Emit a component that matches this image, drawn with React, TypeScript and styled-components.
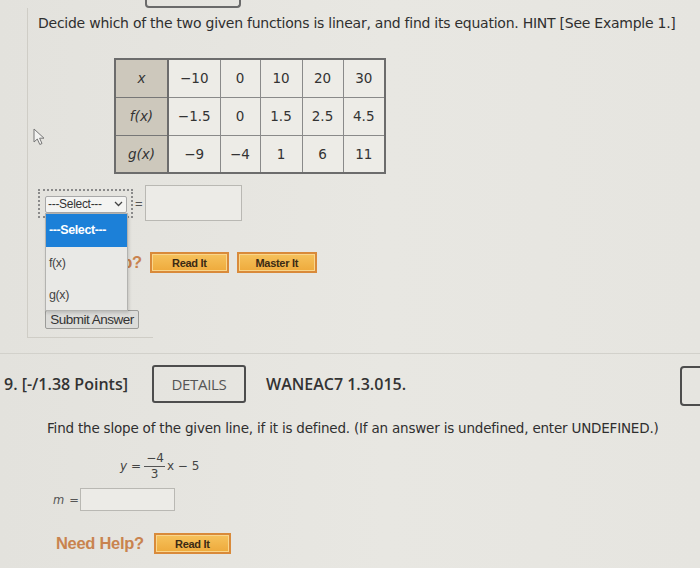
import React from "react";
import styled, { createGlobalStyle } from "styled-components";

// ==================== グローバル ====================

const GlobalStyle = createGlobalStyle`
  html, body {
    margin: 0;
    padding: 0;
    width: 700px;
    height: 568px;
    overflow: hidden;
    background: #e5e4df;
  }
  * { box-sizing: border-box; }
`;

// ==================== スタイル ====================

const Page = styled.div`
  position: relative;
  width: 700px;
  height: 568px;
  overflow: hidden;
  background: linear-gradient(90deg, #e3e2dd 0%, #e8e7e2 55%, #e6e5e0 100%);
  color: #333;
`;

const TopStub = styled.div`
  margin-left: 145px;
  width: 96px;
  height: 8px;
  border: 2px solid #6a6a6a;
  border-top: none;
  border-radius: 0 0 4px 4px;
`;

const ProblemPanel = styled.div`
  position: relative;
  margin-left: 27px;
  height: 330px;
  border-left: 1px solid #cfcdc6;
  padding: 6px 0 0 10px;

  &::after {
    content: "";
    position: absolute;
    left: 0;
    bottom: 0;
    width: 125px;
    border-bottom: 1px solid #cfcdc6;
  }
`;

const Prompt = styled.p`
  margin: 0;
  font-family: "DejaVu Sans", Verdana, sans-serif;
  font-size: 14px;
  letter-spacing: -0.25px;
  line-height: 18px;
  color: #2f2f2f;
`;

const ValueTable = styled.table`
  margin: 26px 0 0 76px;
  border-collapse: collapse;
  border: 2px solid #6c6c6c;
  font-family: "DejaVu Sans", Verdana, sans-serif;
  font-size: 13.5px;
  color: #333;
`;

const HeadCell = styled.th`
  width: 53px;
  height: 38px;
  background: #cdc8bc;
  border: 1px solid #777;
  border-right: 2px solid #6c6c6c;
  font-weight: normal;
  font-style: italic;
  text-align: center;
  padding: 0;
`;

const ValueCell = styled.td<{ $w: number }>`
  width: ${(p) => p.$w}px;
  height: 38px;
  background: #edece7;
  border: 1px solid #8a8a8a;
  text-align: center;
  padding: 0;
`;

const AnswerRow = styled.div`
  display: flex;
  align-items: center;
  margin: 11px 0 0 0;
  height: 36px;
`;

const DottedFrame = styled.div`
  position: relative;
  width: 95px;
  height: 29px;
  border: 2px dotted #8a8a8a;
  padding: 5px 0 0 5px;
`;

const SelectBox = styled.div`
  position: relative;
  display: flex;
  align-items: center;
  justify-content: space-between;
  width: 82px;
  height: 17px;
  background: #f4f4f2;
  border: 1px solid #a8a8a8;
  border-radius: 2px;
  padding: 0 3px 0 2px;
  font-family: "Liberation Sans", Arial, sans-serif;
  font-size: 12px;
  letter-spacing: -0.3px;
  color: #333;
`;

const DropList = styled.div`
  position: absolute;
  top: 16px;
  left: -1px;
  width: 83px;
  height: 98px;
  background: #e9e9e6;
  border: 1px solid #b3b3b0;
  box-shadow: 1px 2px 3px rgba(0, 0, 0, 0.15);
  font-family: "Liberation Sans", Arial, sans-serif;
  font-size: 12.5px;
  letter-spacing: -0.4px;
  z-index: 5;
`;

const DropItem = styled.div<{ $active?: boolean }>`
  height: ${(p) => (p.$active ? 33 : 32)}px;
  display: flex;
  align-items: center;
  padding-left: 3px;
  background: ${(p) => (p.$active ? "#1c80d8" : "transparent")};
  color: ${(p) => (p.$active ? "#fff" : "#444")};
  font-weight: ${(p) => (p.$active ? "bold" : "normal")};
`;

const Equals = styled.span`
  margin: 0 2px 0 2px;
  font-family: "Liberation Sans", Arial, sans-serif;
  font-size: 13px;
  color: #555;
`;

const AnswerInput = styled.div<{ $w: number; $h: number }>`
  width: ${(p) => p.$w}px;
  height: ${(p) => p.$h}px;
  background: #ecebe7;
  border: 1px solid #b9b8b3;
`;

const HelpRow = styled.div<{ $indent: number; $top: number; $gap: number }>`
  display: flex;
  align-items: center;
  gap: ${(p) => p.$gap}px;
  margin-left: ${(p) => p.$indent}px;
  margin-top: ${(p) => p.$top}px;
`;

const HelpLabel = styled.span`
  font-family: "Liberation Sans", Arial, sans-serif;
  font-weight: bold;
  font-size: 16.5px;
  letter-spacing: -0.3px;
  color: #c9834f;
`;

const OrangeButton = styled.div<{ $w: number }>`
  width: ${(p) => p.$w}px;
  height: 21px;
  display: flex;
  align-items: center;
  justify-content: center;
  background: linear-gradient(#f6c25c, #eeaa3c);
  border: 2px solid #d98a3a;
  box-shadow: inset 0 0 0 1px #f9d68c;
  font-family: "Liberation Sans", Arial, sans-serif;
  font-weight: bold;
  font-size: 11px;
  letter-spacing: -0.3px;
  color: #3b2a14;
`;

const SubmitButton = styled.div`
  width: 94px;
  height: 19px;
  margin: 37px 0 0 7px;
  display: flex;
  align-items: center;
  justify-content: center;
  background: #dcdcd9;
  border: 1px solid #9b9b98;
  border-radius: 2px;
  font-family: "Liberation Sans", Arial, sans-serif;
  font-size: 13.5px;
  letter-spacing: -0.5px;
  color: #333;
`;

const Cursor = styled.svg`
  position: absolute;
  left: 5px;
  top: 120px;
  z-index: 6;
`;

const QuestionBlock = styled.div`
  margin-top: 15px;
  border-top: 1px solid #d2d1cb;
  padding-top: 8px;
`;

const QuestionHead = styled.div`
  display: flex;
  align-items: center;
  font-family: "Open Sans", sans-serif;
  color: #333;
`;

const Points = styled.span`
  margin-left: 4px;
  width: 148px;
  font-weight: 600;
  font-size: 16px;
`;

const DetailsButton = styled.div`
  width: 94px;
  height: 38px;
  display: flex;
  align-items: center;
  justify-content: center;
  border: 2px solid #4d4d4d;
  border-radius: 3px;
  font-size: 15px;
  color: #555;
  letter-spacing: -0.3px;
`;

const Code = styled.span`
  margin-left: 20px;
  font-weight: 600;
  font-size: 16px;
`;

const RightStub = styled.div`
  margin-left: auto;
  margin-right: -30px;
  width: 50px;
  height: 40px;
  margin-top: 4px;
  border: 2px solid #4d4d4d;
  border-radius: 4px;
`;

const QuestionBody = styled.div`
  padding-left: 47px;
`;

const Instruction = styled.p`
  margin: 13px 0 0 0;
  font-family: "DejaVu Sans", Verdana, sans-serif;
  font-size: 13.5px;
  letter-spacing: -0.2px;
  line-height: 18px;
  color: #2f2f2f;
`;

const Equation = styled.div`
  display: flex;
  align-items: center;
  margin: 14px 0 0 73px;
  font-family: "DejaVu Sans", Verdana, sans-serif;
  font-size: 12px;
  color: #444;
`;

const Var = styled.i`
  font-style: italic;
  margin-right: 4px;
`;

const Fraction = styled.span`
  display: inline-flex;
  flex-direction: column;
  align-items: center;
  margin: 0 2px 0 3px;
  line-height: 14px;
`;

const Numerator = styled.span`
  border-bottom: 1px solid #555;
  padding: 0 1px 1px 2px;
`;

const SlopeRow = styled.div`
  display: flex;
  align-items: center;
  gap: 1px;
  margin: 7px 0 0 6px;
  font-family: "DejaVu Sans", Verdana, sans-serif;
  font-size: 11.5px;
  color: #555;
`;

// ==================== コンポーネント ====================

const columns = [
  { w: 52, x: "−10", f: "−1.5", g: "−9" },
  { w: 40, x: "0", f: "0", g: "−4" },
  { w: 42, x: "10", f: "1.5", g: "1" },
  { w: 41, x: "20", f: "2.5", g: "6" },
  { w: 42, x: "30", f: "4.5", g: "11" },
];

const Chevron = () => (
  <svg width="9" height="6" viewBox="0 0 9 6">
    <path d="M1 1 L4.5 4.5 L8 1" fill="none" stroke="#444" strokeWidth="1.3" />
  </svg>
);

export default function App() {
  return (
    <>
      <GlobalStyle />
      <Page>
        <TopStub />
        <ProblemPanel>
          <Prompt>
            Decide which of the two given functions is linear, and find its equation. HINT [See Example 1.]
          </Prompt>
          <ValueTable>
            <tbody>
              <tr>
                <HeadCell>x</HeadCell>
                {columns.map((c, i) => (
                  <ValueCell key={i} $w={c.w}>{c.x}</ValueCell>
                ))}
              </tr>
              <tr>
                <HeadCell>f(x)</HeadCell>
                {columns.map((c, i) => (
                  <ValueCell key={i} $w={c.w}>{c.f}</ValueCell>
                ))}
              </tr>
              <tr>
                <HeadCell>g(x)</HeadCell>
                {columns.map((c, i) => (
                  <ValueCell key={i} $w={c.w}>{c.g}</ValueCell>
                ))}
              </tr>
            </tbody>
          </ValueTable>

          <AnswerRow>
            <DottedFrame>
              <SelectBox>
                <span>---Select---</span>
                <Chevron />
                <DropList>
                  <DropItem $active>---Select---</DropItem>
                  <DropItem>f(x)</DropItem>
                  <DropItem>g(x)</DropItem>
                </DropList>
              </SelectBox>
            </DottedFrame>
            <Equals>=</Equals>
            <AnswerInput $w={97} $h={36} />
          </AnswerRow>

          <HelpRow $indent={16} $top={31} $gap={8}>
            <HelpLabel>Need Help?</HelpLabel>
            <OrangeButton $w={79}>Read It</OrangeButton>
            <OrangeButton $w={80}>Master It</OrangeButton>
          </HelpRow>

          <SubmitButton>Submit Answer</SubmitButton>

          <Cursor width="14" height="18" viewBox="0 0 14 18">
            <path
              d="M1 1 L1 14 L4.3 11 L6.8 16.5 L9 15.5 L6.6 10.2 L11 10.2 Z"
              fill="#f2f2f0"
              stroke="#777"
              strokeWidth="1"
              strokeLinejoin="round"
            />
          </Cursor>
        </ProblemPanel>

        <QuestionBlock>
          <QuestionHead>
            <Points>9. [-/1.38 Points]</Points>
            <DetailsButton>DETAILS</DetailsButton>
            <Code>WANEAC7 1.3.015.</Code>
            <RightStub />
          </QuestionHead>
          <QuestionBody>
            <Instruction>
              Find the slope of the given line, if it is defined. (If an answer is undefined, enter UNDEFINED.)
            </Instruction>
            <Equation>
              <Var>y</Var>=
              <Fraction>
                <Numerator>−4</Numerator>
                <span>3</span>
              </Fraction>
              <span>x − 5</span>
            </Equation>
            <SlopeRow>
              <Var>m</Var>=
              <AnswerInput $w={95} $h={23} />
            </SlopeRow>
            <HelpRow $indent={9} $top={22} $gap={10}>
              <HelpLabel>Need Help?</HelpLabel>
              <OrangeButton $w={77}>Read It</OrangeButton>
            </HelpRow>
          </QuestionBody>
        </QuestionBlock>
      </Page>
    </>
  );
}
